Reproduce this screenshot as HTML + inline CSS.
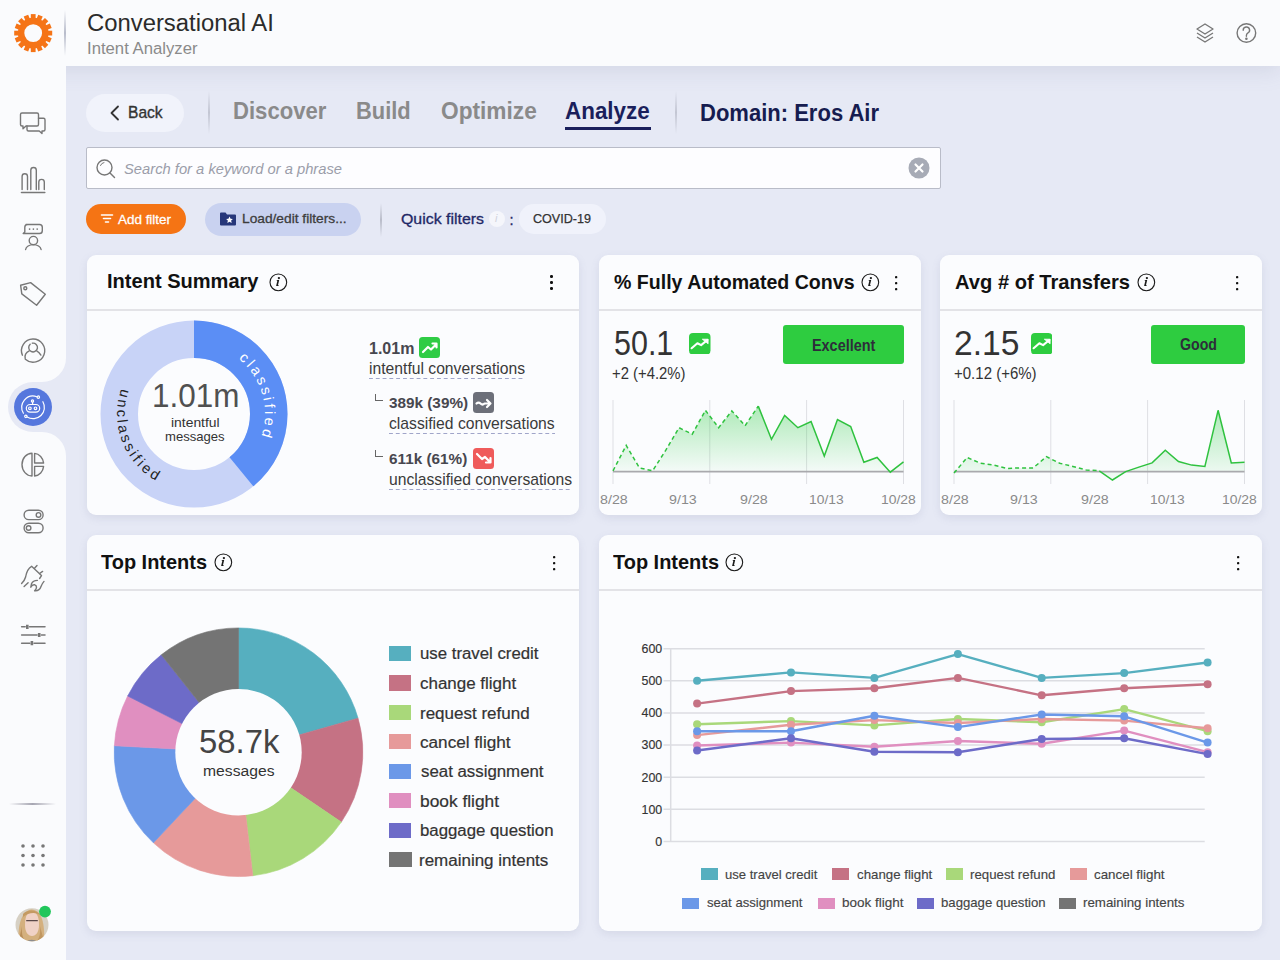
<!DOCTYPE html>
<html><head><meta charset="utf-8">
<style>
*{margin:0;padding:0;box-sizing:border-box}
html,body{width:1280px;height:960px;overflow:hidden}
body{font-family:"Liberation Sans",sans-serif;background:#e6e9f5;position:relative;color:#222}
.abs{position:absolute}
.t{position:absolute;white-space:nowrap;line-height:1}
#header{position:absolute;left:0;top:0;width:1280px;height:66px;background:#fafbfd;z-index:3;box-shadow:0 5px 20px rgba(105,115,150,0.15)}
#side{position:absolute;left:0;top:0;width:66px;height:960px;background:#fafbfd;z-index:4}
.card{position:absolute;background:#fbfcfe;border-radius:9px;box-shadow:0 3px 8px rgba(100,110,150,0.13)}
.chead{position:absolute;left:0;right:0;top:0;height:56px;border-bottom:2px solid #e3e3e7}
.title{position:absolute;font-weight:bold;color:#111;font-size:20px;white-space:nowrap;line-height:1}
.kebab{position:absolute;width:3px}
.kebab i{display:block;width:3px;height:3px;border-radius:50%;background:#222;margin-bottom:3px}
</style></head>
<body>
<div id="side">
<svg class="abs" style="left:0;top:0" width="66" height="66" viewBox="0 0 66 66">
    <g fill="#f57417" transform="translate(33.2 33.1)">
    <circle r="12.1" fill="none" stroke="#f57417" stroke-width="6.4"/>
    <rect x="-2.4" y="-19" width="4.8" height="6" transform="rotate(0)"/><rect x="-2.4" y="-19" width="4.8" height="6" transform="rotate(22.5)"/><rect x="-2.4" y="-19" width="4.8" height="6" transform="rotate(45)"/><rect x="-2.4" y="-19" width="4.8" height="6" transform="rotate(67.5)"/><rect x="-2.4" y="-19" width="4.8" height="6" transform="rotate(90)"/><rect x="-2.4" y="-19" width="4.8" height="6" transform="rotate(112.5)"/><rect x="-2.4" y="-19" width="4.8" height="6" transform="rotate(135)"/><rect x="-2.4" y="-19" width="4.8" height="6" transform="rotate(157.5)"/><rect x="-2.4" y="-19" width="4.8" height="6" transform="rotate(180)"/><rect x="-2.4" y="-19" width="4.8" height="6" transform="rotate(202.5)"/><rect x="-2.4" y="-19" width="4.8" height="6" transform="rotate(225)"/><rect x="-2.4" y="-19" width="4.8" height="6" transform="rotate(247.5)"/><rect x="-2.4" y="-19" width="4.8" height="6" transform="rotate(270)"/><rect x="-2.4" y="-19" width="4.8" height="6" transform="rotate(292.5)"/><rect x="-2.4" y="-19" width="4.8" height="6" transform="rotate(315)"/><rect x="-2.4" y="-19" width="4.8" height="6" transform="rotate(337.5)"/>
    </g>
  </svg>
  <div class="abs" style="left:64px;top:10px;width:2px;height:46px;background:linear-gradient(rgba(200,204,216,0),#b8bccb 50%,rgba(200,204,216,0))"></div>
  
  <!-- active notch -->
  <div class="abs" style="left:33px;top:340px;width:40px;height:130px;background:#e6e9f5"></div>
  <div class="abs" style="left:20px;top:318px;width:46px;height:64px;background:#fafbfd;border-bottom-right-radius:24px"></div>
  <div class="abs" style="left:20px;top:432px;width:46px;height:64px;background:#fafbfd;border-top-right-radius:24px"></div>
  <div class="abs" style="left:8px;top:382px;width:50px;height:50px;border-radius:50%;background:#e6e9f5"></div>
  <div class="abs" style="left:14px;top:388px;width:38px;height:38px;border-radius:50%;background:#5577dd"></div>
  <svg class="abs" style="left:0;top:0" width="66" height="960" viewBox="0 0 66 960" fill="none" stroke="#777" stroke-width="1.4" stroke-linejoin="round" stroke-linecap="round">
    <path d="M22 113 h15 a1.5 1.5 0 0 1 1.5 1.5 v10 a1.5 1.5 0 0 1 -1.5 1.5 h-11 l-3 2.8 v-2.8 h-1 a1.5 1.5 0 0 1 -1.5 -1.5 v-10 a1.5 1.5 0 0 1 1.5 -1.5z"/>
    <path d="M38.5 118.3 h5 a1.5 1.5 0 0 1 1.5 1.5 v9.7 a1.5 1.5 0 0 1 -1.5 1.5 h-1.5 l0 2.5 l-2.8 -2.5 h-10.7 a1.5 1.5 0 0 1 -1.5 -1.5 v-3.5"/>
    <path d="M22.1 189.5 v-13 a2.7 2.7 0 0 1 5.4 0 v13 M30.8 189.5 v-19.3 a2.75 2.75 0 0 1 5.5 0 v19.3 M38.8 189.5 v-7.4 a2.75 2.75 0 0 1 5.5 0 v7.4"/>
    <path d="M21.5 192.5 h23.3" stroke-width="1.6"/>
    <path d="M26 224.5 h13.5 a2.8 2.8 0 0 1 2.8 2.8 v3.4 a2.8 2.8 0 0 1 -2.8 2.8 h-16.3 l1.6 -1.6 v-4.6 a2.8 2.8 0 0 1 2.8 -2.8z"/>
    <g fill="#777" stroke="none"><circle cx="29.6" cy="229.1" r="0.85"/><circle cx="33.4" cy="229.1" r="0.85"/><circle cx="37.2" cy="229.1" r="0.85"/></g>
    <circle cx="33.4" cy="240.6" r="4.2"/>
    <path d="M25.6 249.5 a7.8 5.5 0 0 1 15.5 0"/>
    <path d="M20.6 285.2 L30.6 282.6 L45.3 294.3 L36.6 305.2 L21.8 293.9 Z"/>
    <circle cx="25.3" cy="288.2" r="1.5"/>
    <path d="M22.42 355.18 A11.6 11.6 0 1 1 25.34 359.27"/>
    <path d="M32.34 343.17 A4.4 4.4 0 1 1 30.16 344.23"/>
    <path d="M29.3 350.9 C25.8 352.6 24.6 355.6 25.2 358.4"/>
    <path d="M36.7 350.8 C38.6 351.8 40 353.4 40.9 355.1"/>
    <path d="M32 453.2 A10 11.4 0 0 0 32 476 Z"/>
    <path d="M34.6 453.4 A9.8 10.8 0 0 1 43.6 463 H34.6 Z"/>
    <path d="M34.6 466.4 H43.6 A9.8 10.8 0 0 1 34.6 476 Z"/>
    <rect x="24.1" y="510.2" width="19" height="9.4" rx="4.7"/>
    <circle cx="38.5" cy="514.9" r="2.3"/>
    <rect x="24.1" y="523.2" width="19" height="9.6" rx="4.8"/>
    <circle cx="28.6" cy="528" r="2.3"/>
    <path d="M21.6 583.4 C24 581 25 579.5 25.6 577 C26.5 572 28.5 568 31.6 566.3 L41.5 575.6 L39.6 578.5"/>
    <path d="M34.5 568.2 L37 565.6 M39.6 573.5 L42.6 571.4"/>
    <path d="M24.1 586.6 L28.1 582.8"/>
    <path d="M37.4 580.4 C35 580.6 32.6 581.5 31.6 583.5 L30.8 587.2 C31.6 585.6 33 584.4 34.8 584.8 C37 585.5 37.2 588.6 34.6 590.7 C37.5 591 40 589.5 41 586.5 C42 584 43 582.5 44 581.4"/>
    <path d="M21.6 626.8 h3.6 M29.5 626.8 h15.5 M21.6 635 h15.5 M41.3 635 h3.7 M21.6 643.2 h8.3 M34 643.2 h11" stroke-width="1.5"/>
    <path d="M27.3 624.8 v4.2 M39.2 632.9 v4.2 M31.9 641.1 v4.2" stroke-width="2.6" stroke-linecap="butt"/>
  </svg>
  <svg class="abs" style="left:14px;top:388px" width="38" height="38" viewBox="0 0 38 38" fill="none" stroke="#fff" stroke-width="1.2" stroke-linecap="round">
    <path d="M9.41 25.22 A11.3 11.3 0 0 1 22.96 8.78"/>
    <path d="M28.89 13.75 A11.3 11.3 0 0 1 13.11 28.98"/>
    <circle cx="24.32" cy="9.15" r="1.2"/>
    <circle cx="11.86" cy="28.34" r="1.2"/>
    <rect x="12.3" y="16.5" width="13.4" height="7.7" rx="3.85"/>
    <circle cx="15.9" cy="20.3" r="1.3"/><circle cx="21.5" cy="20.3" r="1.3"/>
    <path d="M18.6 16.5 v-2.3"/><circle cx="18.5" cy="13" r="1.1"/>
  </svg>
  <div class="abs" style="left:9px;top:803px;width:47px;height:2px;background:linear-gradient(90deg,rgba(160,160,175,0),#a6a6b2 50%,rgba(160,160,175,0))"></div>
  <svg class="abs" style="left:20px;top:843px" width="26" height="26" viewBox="0 0 26 26" fill="#777">
    <circle cx="3" cy="3" r="1.8"/><circle cx="13" cy="3" r="1.8"/><circle cx="23" cy="3" r="1.8"/>
    <circle cx="3" cy="12.5" r="1.8"/><circle cx="13" cy="12.5" r="1.8"/><circle cx="23" cy="12.5" r="1.8"/>
    <circle cx="3" cy="22" r="1.8"/><circle cx="13" cy="22" r="1.8"/><circle cx="23" cy="22" r="1.8"/>
  </svg>
  <svg class="abs" style="left:12px;top:902px" width="44" height="44" viewBox="12 902 44 44">
    <defs><clipPath id="av"><circle cx="32" cy="924.7" r="16.5"/></clipPath></defs>
    <circle cx="32" cy="924.7" r="16.5" fill="#d6d0c4"/>
    <g clip-path="url(#av)">
      <path d="M19 945 C17 930 20 911 31.5 909.5 C43 910 45 926 44 945 Z" fill="#d4b07e"/>
      <path d="M25 925 C25 915 28 912 32 912 C36 912 39 915 39 925 C39 932 36 936 32 936 C28 936 25 932 25 925Z" fill="#f0d2c6"/>
      <path d="M23 914 C27 909 37 909 41 916 C37 912 29 912 23 917Z" fill="#c49a62"/>
      <path d="M26.2 920.6 h5 M32.8 920.6 h5 M31.2 920.6 h1.6" stroke="#5a4848" stroke-width="1.1"/>
      <path d="M25 945 C26 938 37 938 39 945Z" fill="#8c8c8e"/>
      <path d="M22 926 C21 936 24 940 27 942 L24 945 L18 945Z" fill="#b98e58"/>
      <path d="M40 926 C41 936 38 940 36 942 L38 945 L45 945Z" fill="#c09660"/>
    </g>
    <circle cx="45" cy="911.6" r="5.9" fill="#21c65b"/>
  </svg>
</div>
<div id="header">
  <div class="t" style="left:87.31px;top:12.47px;font-size:23.33px;color:#2b2b2b;transform-origin:0 0;transform:scaleX(1.0222);">Conversational AI</div>
  <div class="t" style="left:86.99px;top:40.01px;font-size:16.13px;color:#8a8a8a;transform-origin:0 0;transform:scaleX(1.0367);">Intent Analyzer</div>
  <svg class="abs" style="left:1194px;top:21px" width="64" height="26" viewBox="0 0 64 26" fill="none" stroke="#777" stroke-width="1.4" stroke-linejoin="round">
    <path d="M11 3 l8 5 l-8 5 l-8 -5z"/>
    <path d="M3 12 l8 5 l8 -5"/>
    <path d="M3 16 l8 5 l8 -5"/>
    <circle cx="52.4" cy="12" r="9.3"/>
    <path d="M49.2 9.2 a3.2 3.2 0 1 1 4.5 2.9 c-1 0.5 -1.3 1.2 -1.3 2.3 v0.8" stroke-linecap="round"/>
    <circle cx="52.4" cy="17.8" r="0.6" fill="#777"/>
  </svg>
</div>
<!-- nav -->
<div class="abs" style="left:86px;top:94px;width:98px;height:38px;border-radius:19px;background:#f1f3fb"></div>
<svg class="abs" style="left:108px;top:104px" width="14" height="18" viewBox="0 0 14 18" fill="none" stroke="#333" stroke-width="1.8" stroke-linecap="round" stroke-linejoin="round"><path d="M10 2.5 l-6.5 6.5 l6.5 6.5"/></svg>
<div class="t" style="left:128.35px;top:105.23px;font-size:15.99px;color:#333;transform-origin:0 0;transform:scaleX(0.9739);-webkit-text-stroke:0.35px #333">Back</div>
<div class="abs" style="left:208px;top:91px;width:2px;height:43px;background:linear-gradient(rgba(200,204,216,0),#c3c6d3 50%,rgba(200,204,216,0))"></div>
<div class="t" style="left:233.26px;top:99.28px;font-size:24.50px;font-weight:bold;color:#8a8a8a;transform-origin:0 0;transform:scaleX(0.9020);">Discover</div>
<div class="t" style="left:356.48px;top:99.28px;font-size:24.50px;font-weight:bold;color:#8a8a8a;transform-origin:0 0;transform:scaleX(0.8938);">Build</div>
<div class="t" style="left:440.59px;top:99.28px;font-size:24.50px;font-weight:bold;color:#8a8a8a;transform-origin:0 0;transform:scaleX(0.9256);">Optimize</div>
<div class="t" style="left:565.04px;top:99.28px;font-size:24.50px;font-weight:bold;color:#1a1f5c;transform-origin:0 0;transform:scaleX(0.9151);">Analyze</div>
<div class="abs" style="left:565px;top:127px;width:86px;height:3px;background:#1a1f5c"></div>
<div class="abs" style="left:675px;top:91px;width:2px;height:43px;background:linear-gradient(rgba(200,204,216,0),#c3c6d3 50%,rgba(200,204,216,0))"></div>
<div class="t" style="left:700.27px;top:101.16px;font-size:24.40px;font-weight:bold;color:#161c50;transform-origin:0 0;transform:scaleX(0.9027);">Domain: Eros Air</div>
<!-- search -->
<div class="abs" style="left:86px;top:147px;width:855px;height:42px;background:#fdfdff;border:1.5px solid #b9bcc8;border-radius:2px"></div>
<svg class="abs" style="left:94px;top:157px" width="24" height="24" viewBox="0 0 24 24" fill="none" stroke="#777" stroke-width="1.4" stroke-linecap="round"><circle cx="10.5" cy="10.5" r="7.5"/><path d="M16 16 l4.5 4.5"/><path d="M6.5 8.5 a4.5 4.5 0 0 1 3.5 -3" stroke-width="1"/></svg>
<div class="t" style="left:123.56px;top:160.85px;font-size:15.40px;font-style:italic;color:#9b9daa;transform-origin:0 0;transform:scaleX(0.9581);">Search for a keyword or a phrase</div>
<svg class="abs" style="left:908px;top:157px" width="22" height="22" viewBox="0 0 22 22"><circle cx="11" cy="11" r="10.5" fill="#a7abb6"/><path d="M7.5 7.5 l7 7 M14.5 7.5 l-7 7" stroke="#fff" stroke-width="2.2" stroke-linecap="round"/></svg>
<!-- filters -->
<div class="abs" style="left:86px;top:204px;width:100px;height:30px;border-radius:15px;background:#f57414"></div>
<svg class="abs" style="left:100px;top:212px" width="14" height="14" viewBox="0 0 14 14" stroke="#fff" stroke-width="1.6" stroke-linecap="round"><path d="M1.5 3 h11 M3.5 6.5 h7 M5.5 10 h3"/></svg>
<div class="t" style="left:117.75px;top:212.67px;font-size:13.20px;color:#fff;transform-origin:0 0;transform:scaleX(1.0188);-webkit-text-stroke:0.3px #fff">Add filter</div>
<div class="abs" style="left:204.5px;top:202.8px;width:156.5px;height:33px;border-radius:16.5px;background:#c9d2f0"></div>
<svg class="abs" style="left:219px;top:211px" width="18" height="16" viewBox="0 0 18 16"><path d="M1 2.5 a1 1 0 0 1 1 -1 h4.5 l1.5 2 h8 a1 1 0 0 1 1 1 v9 a1 1 0 0 1 -1 1 h-14 a1 1 0 0 1 -1 -1z" fill="#27377a"/><path d="M10.5 5.6 l1.05 2.2 l2.35 0.25 l-1.75 1.55 l0.5 2.35 l-2.15 -1.2 l-2.15 1.2 l0.5 -2.35 l-1.75 -1.55 l2.35 -0.25z" fill="#fff"/></svg>
<div class="t" style="left:241.80px;top:212.37px;font-size:13.20px;color:#3d3d3d;transform-origin:0 0;transform:scaleX(1.0415);-webkit-text-stroke:0.3px #3d3d3d">Load/edit filters...</div>
<div class="abs" style="left:380px;top:203px;width:2px;height:34px;background:linear-gradient(rgba(200,204,216,0),#b9bcc9 50%,rgba(200,204,216,0))"></div>
<div class="t" style="left:401.28px;top:211.50px;font-size:14.60px;color:#1f2866;transform-origin:0 0;transform:scaleX(1.0883);-webkit-text-stroke:0.3px #1f2866">Quick filters</div>
<div class="abs" style="left:489px;top:211px;width:16px;height:16px;border-radius:50%;background:#f5f6fb"></div>
<div class="t" style="left:495px;top:213px;font-size:11px;font-style:italic;color:#d0d2dc">i</div>
<div class="t" style="left:509.5px;top:212.5px;font-size:14.5px;color:#1f2866;-webkit-text-stroke:0.3px #1f2866">:</div>
<div class="abs" style="left:519px;top:204px;width:87px;height:30px;border-radius:15px;background:#f0f2fb"></div>
<div class="t" style="left:533.12px;top:212.05px;font-size:13.10px;color:#333;transform-origin:0 0;transform:scaleX(0.9595);-webkit-text-stroke:0.25px #333">COVID-19</div>

<div class="card" style="left:87px;top:255px;width:492px;height:260px"><div class="chead"></div></div>
<div class="card" style="left:599px;top:255px;width:322px;height:260px"><div class="chead"></div></div>
<div class="card" style="left:940px;top:255px;width:322px;height:260px"><div class="chead"></div></div>
<div class="card" style="left:87px;top:535px;width:492px;height:396px"><div class="chead"></div></div>
<div class="card" style="left:599px;top:535px;width:663px;height:396px"><div class="chead"></div></div>
<div class="title" style="left:107px;top:270.47px;font-size:21px;transform-origin:0 0;transform:scaleX(0.9546)">Intent Summary</div>
<svg class="abs" style="left:268.05px;top:271.55px" width="20.7" height="20.7" viewBox="0 0 20.7 20.7"><circle cx="10.35" cy="10.35" r="8.35" fill="none" stroke="#1a1a1a" stroke-width="1.1"/><circle cx="10.9" cy="6.1" r="1.15" fill="#1a1a1a"/><path d="M8.9 8.05 h2.3 l-1.25 5.2 h0.9 l-0.25 0.75 h-2.5 l1.25 -5.2 h-0.75 z" fill="#1a1a1a"/></svg>
<svg class="abs" style="left:550px;top:275px" width="4" height="16" viewBox="0 0 4 16" fill="#111"><rect y="0" width="3" height="3" rx="1.2"/><rect y="6" width="3" height="3" rx="1.2"/><rect y="12" width="3" height="3" rx="1.2"/></svg>
<div class="title" style="left:613.5px;top:270.97px;font-size:21px;transform-origin:0 0;transform:scaleX(0.9313)">% Fully Automated Convs</div>
<svg class="abs" style="left:860.25px;top:271.65px" width="20.7" height="20.7" viewBox="0 0 20.7 20.7"><circle cx="10.35" cy="10.35" r="8.35" fill="none" stroke="#1a1a1a" stroke-width="1.1"/><circle cx="10.9" cy="6.1" r="1.15" fill="#1a1a1a"/><path d="M8.9 8.05 h2.3 l-1.25 5.2 h0.9 l-0.25 0.75 h-2.5 l1.25 -5.2 h-0.75 z" fill="#1a1a1a"/></svg>
<svg class="abs" style="left:894.9px;top:276.1px" width="4" height="16" viewBox="0 0 4 16" fill="#111"><rect y="0" width="2.3" height="2.3" rx="0.92"/><rect y="6" width="2.3" height="2.3" rx="0.92"/><rect y="12" width="2.3" height="2.3" rx="0.92"/></svg>
<div class="title" style="left:954.7px;top:270.97px;font-size:21px;transform-origin:0 0;transform:scaleX(0.9592)">Avg # of Transfers</div>
<svg class="abs" style="left:1135.65px;top:271.65px" width="20.7" height="20.7" viewBox="0 0 20.7 20.7"><circle cx="10.35" cy="10.35" r="8.35" fill="none" stroke="#1a1a1a" stroke-width="1.1"/><circle cx="10.9" cy="6.1" r="1.15" fill="#1a1a1a"/><path d="M8.9 8.05 h2.3 l-1.25 5.2 h0.9 l-0.25 0.75 h-2.5 l1.25 -5.2 h-0.75 z" fill="#1a1a1a"/></svg>
<svg class="abs" style="left:1236.2px;top:276.2px" width="4" height="16" viewBox="0 0 4 16" fill="#111"><rect y="0" width="2.3" height="2.3" rx="0.92"/><rect y="6" width="2.3" height="2.3" rx="0.92"/><rect y="12" width="2.3" height="2.3" rx="0.92"/></svg>
<div class="title" style="left:101.4px;top:550.97px;font-size:21px;transform-origin:0 0;transform:scaleX(0.9499)">Top Intents</div>
<svg class="abs" style="left:212.65px;top:551.65px" width="20.7" height="20.7" viewBox="0 0 20.7 20.7"><circle cx="10.35" cy="10.35" r="8.35" fill="none" stroke="#1a1a1a" stroke-width="1.1"/><circle cx="10.9" cy="6.1" r="1.15" fill="#1a1a1a"/><path d="M8.9 8.05 h2.3 l-1.25 5.2 h0.9 l-0.25 0.75 h-2.5 l1.25 -5.2 h-0.75 z" fill="#1a1a1a"/></svg>
<svg class="abs" style="left:553.4px;top:555.8px" width="4" height="16" viewBox="0 0 4 16" fill="#111"><rect y="0" width="2.3" height="2.3" rx="0.92"/><rect y="6" width="2.3" height="2.3" rx="0.92"/><rect y="12" width="2.3" height="2.3" rx="0.92"/></svg>
<div class="title" style="left:613.2px;top:550.97px;font-size:21px;transform-origin:0 0;transform:scaleX(0.9499)">Top Intents</div>
<svg class="abs" style="left:724.15px;top:551.65px" width="20.7" height="20.7" viewBox="0 0 20.7 20.7"><circle cx="10.35" cy="10.35" r="8.35" fill="none" stroke="#1a1a1a" stroke-width="1.1"/><circle cx="10.9" cy="6.1" r="1.15" fill="#1a1a1a"/><path d="M8.9 8.05 h2.3 l-1.25 5.2 h0.9 l-0.25 0.75 h-2.5 l1.25 -5.2 h-0.75 z" fill="#1a1a1a"/></svg>
<svg class="abs" style="left:1236.8px;top:555.8px" width="4" height="16" viewBox="0 0 4 16" fill="#111"><rect y="0" width="2.3" height="2.3" rx="0.92"/><rect y="6" width="2.3" height="2.3" rx="0.92"/><rect y="12" width="2.3" height="2.3" rx="0.92"/></svg>
<svg class="abs" style="left:87px;top:310px" width="220" height="205" viewBox="87 310 220 205">
<circle cx="194" cy="414" r="74.75" fill="none" stroke="#c8d3f7" stroke-width="37.5"/>
<circle cx="194" cy="414" r="74.75" fill="none" stroke="#5b8ef5" stroke-width="37.5" stroke-dasharray="183.171 469.668" transform="rotate(-90 194 414)"/>
<path id="pc" d="M175.026 345.582 A71 71 0 0 1 212.974 482.418" fill="none"/>
<path id="pu" d="M165.779 342.358 A77 77 0 0 0 222.221 485.642" fill="none"/>
<text font-family="Liberation Sans" font-size="14.5" letter-spacing="2.9" fill="#fff"><textPath href="#pc" startOffset="50%" text-anchor="middle">classified</textPath></text>
<text font-family="Liberation Sans" font-size="14.5" letter-spacing="2.8" fill="#222"><textPath href="#pu" startOffset="50%" text-anchor="middle">unclassified</textPath></text>
</svg>
<div class="t" style="left:151.64px;top:380.44px;font-size:32.50px;color:#505050;transform-origin:0 0;transform:scaleX(0.9674);">1.01m</div>
<div class="t" style="left:170.50px;top:415.91px;font-size:13.40px;color:#333;transform-origin:0 0;transform:scaleX(1.0364);">intentful</div>
<div class="t" style="left:164.95px;top:429.61px;font-size:13.40px;color:#333;transform-origin:0 0;transform:scaleX(0.9772);">messages</div>
<div class="t" style="left:369px;top:341px;font-size:16px;font-weight:bold;color:#47474f">1.01m</div>
<svg class="abs" style="left:419px;top:337px" width="21" height="21" viewBox="0 0 21 21"><rect width="21" height="21" rx="3.5" fill="#2fcc45"/><path d="M4 15 L9 10 L12 12.5 L17 7.5 M13.5 6.5 h4 v4" fill="none" stroke="#fff" stroke-width="2.2" stroke-linecap="round" stroke-linejoin="round"/></svg>
<div class="t" style="left:369px;top:361px;font-size:15.7px;color:#3a3a3a;padding-bottom:2.2px;background:linear-gradient(90deg,#a0a5c9 62%,rgba(0,0,0,0) 0) repeat-x 0 100%/6.8px 1.2px">intentful conversations</div>
<div class="abs" style="left:375px;top:394px;width:8px;height:7px;border-left:1.3px solid #666;border-bottom:1.3px solid #666"></div>
<div class="t" style="left:389px;top:395px;font-size:15.3px;font-weight:bold;color:#47474f">389k (39%)</div>
<svg class="abs" style="left:473px;top:392px" width="21" height="21" viewBox="0 0 21 21"><rect width="21" height="21" rx="3.5" fill="#6c6f79"/><path d="M3.5 11.5 q2 -2 4 0 t4 0 h6 M14 8 l3.5 3.5 l-3.5 3.5" fill="none" stroke="#fff" stroke-width="2.2" stroke-linecap="round" stroke-linejoin="round"/></svg>
<div class="t" style="left:389px;top:416px;font-size:15.7px;color:#3a3a3a;padding-bottom:2.2px;background:linear-gradient(90deg,#a0a5c9 62%,rgba(0,0,0,0) 0) repeat-x 0 100%/6.8px 1.2px">classified conversations</div>
<div class="abs" style="left:375px;top:450px;width:8px;height:7px;border-left:1.3px solid #666;border-bottom:1.3px solid #666"></div>
<div class="t" style="left:389px;top:451px;font-size:15.3px;font-weight:bold;color:#47474f">611k (61%)</div>
<svg class="abs" style="left:473px;top:448px" width="21" height="21" viewBox="0 0 21 21"><rect width="21" height="21" rx="3.5" fill="#ef5b5b"/><path d="M4 6 L9 11 L12 9 L17 14 M13 14.5 h4.5 v-4.5" fill="none" stroke="#fff" stroke-width="2.2" stroke-linecap="round" stroke-linejoin="round"/></svg>
<div class="t" style="left:389px;top:472px;font-size:15.7px;color:#3a3a3a;padding-bottom:2.2px;background:linear-gradient(90deg,#a0a5c9 62%,rgba(0,0,0,0) 0) repeat-x 0 100%/6.8px 1.2px">unclassified conversations</div>
<div class="t" style="left:613.58px;top:326.49px;font-size:34.30px;color:#333;transform-origin:0 0;transform:scaleX(0.8887);">50.1</div>
<div class="t" style="left:612.46px;top:365.58px;font-size:16.55px;color:#333;transform-origin:0 0;transform:scaleX(0.8984);">+2 (+4.2%)</div>
<div class="abs" style="left:783.25px;top:324.7px;width:120.85px;height:39px;background:#2ecc40;border-radius:3px"></div>
<div class="t" style="left:812.06px;top:337.54px;font-size:15.72px;font-weight:bold;color:#2d2d3a;transform-origin:0 0;transform:scaleX(0.9167);">Excellent</div>
<svg class="abs" style="left:689.4px;top:332.8px" width="21.5" height="21.5" viewBox="0 0 21.5 21.5"><rect width="21.5" height="21.5" rx="4" fill="#2ecc40"/><path d="M2.6 15.2 L8.4 10.2 L12.1 12.1 L18.4 7" fill="none" stroke="#fff" stroke-width="2.1" stroke-linecap="round" stroke-linejoin="round"/><path d="M13.3 6.2 H19.1 V10.8 Z" fill="#fff" stroke="#fff" stroke-width="0.8" stroke-linejoin="round"/></svg>
<div class="t" style="left:953.62px;top:326.49px;font-size:34.30px;color:#333;transform-origin:0 0;transform:scaleX(0.9792);">2.15</div>
<div class="t" style="left:953.65px;top:365.58px;font-size:16.55px;color:#333;transform-origin:0 0;transform:scaleX(0.9079);">+0.12 (+6%)</div>
<div class="abs" style="left:1150.9px;top:324.7px;width:94.1px;height:39px;background:#2ecc40;border-radius:3px"></div>
<div class="t" style="left:1179.93px;top:336.94px;font-size:16.97px;font-weight:bold;color:#2d2d3a;transform-origin:0 0;transform:scaleX(0.8353);">Good</div>
<svg class="abs" style="left:1030.8px;top:332.8px" width="21.5" height="21.5" viewBox="0 0 21.5 21.5"><rect width="21.5" height="21.5" rx="4" fill="#2ecc40"/><path d="M2.6 15.2 L8.4 10.2 L12.1 12.1 L18.4 7" fill="none" stroke="#fff" stroke-width="2.1" stroke-linecap="round" stroke-linejoin="round"/><path d="M13.3 6.2 H19.1 V10.8 Z" fill="#fff" stroke="#fff" stroke-width="0.8" stroke-linejoin="round"/></svg>
<svg class="abs" style="left:599px;top:395px" width="310" height="120" viewBox="599 395 310 120"><defs><linearGradient id="g599" x1="0" y1="0" x2="0" y2="1"><stop offset="0" stop-color="#2fcc45" stop-opacity="0.38"/><stop offset="1" stop-color="#2fcc45" stop-opacity="0.03"/></linearGradient></defs><line x1="613" y1="400" x2="613" y2="484" stroke="#dedfe4" stroke-width="1"/><line x1="709.8" y1="400" x2="709.8" y2="484" stroke="#dedfe4" stroke-width="1"/><line x1="806.6" y1="400" x2="806.6" y2="484" stroke="#dedfe4" stroke-width="1"/><line x1="903.5" y1="400" x2="903.5" y2="484" stroke="#dedfe4" stroke-width="1"/><path d="M613 471.6 L613 470.8 L626.205 445.4 L639.409 467.9 L652.614 470.8 L665.818 450.2 L679.023 427.7 L692.227 434.2 L705.432 410.3 L718.636 427.7 L731.841 410.9 L745.045 425.8 L758.25 406.1 L771.455 439.3 L784.659 415.4 L797.864 427.7 L811.068 421.5 L824.273 456.1 L837.477 419.6 L850.682 426.6 L863.886 462.3 L877.091 457.5 L890.295 472.2 L903.5 461.8 L903.5 471.6 Z" fill="url(#g599)"/><line x1="613" y1="471.6" x2="903.5" y2="471.6" stroke="#a9a9ad" stroke-width="1.6"/><path d="M613 470.8 L626.205 445.4 L639.409 467.9 L652.614 470.8 L665.818 450.2 L679.023 427.7 L692.227 434.2 L705.432 410.3 L718.636 427.7 L731.841 410.9 L745.045 425.8 L758.25 406.1" fill="none" stroke="#2fc23f" stroke-width="1.5" stroke-dasharray="4 3"/><path d="M758.25 406.1 L771.455 439.3 L784.659 415.4 L797.864 427.7 L811.068 421.5 L824.273 456.1 L837.477 419.6 L850.682 426.6 L863.886 462.3 L877.091 457.5 L890.295 472.2 L903.5 461.8" fill="none" stroke="#2fc23f" stroke-width="1.5"/></svg>
<div class="t" style="left:599.96px;top:493.56px;font-size:12.97px;color:#8a8a8a;transform-origin:0 0;transform:scaleX(1.0989);">8/28</div>
<div class="t" style="left:669.16px;top:493.56px;font-size:12.97px;color:#8a8a8a;transform-origin:0 0;transform:scaleX(1.0989);">9/13</div>
<div class="t" style="left:740.16px;top:493.56px;font-size:12.97px;color:#8a8a8a;transform-origin:0 0;transform:scaleX(1.0989);">9/28</div>
<div class="t" style="left:809.16px;top:493.56px;font-size:12.97px;color:#8a8a8a;transform-origin:0 0;transform:scaleX(1.0672);">10/13</div>
<div class="t" style="left:880.86px;top:493.56px;font-size:12.97px;color:#8a8a8a;transform-origin:0 0;transform:scaleX(1.0736);">10/28</div>
<svg class="abs" style="left:940px;top:395px" width="310" height="120" viewBox="940 395 310 120"><defs><linearGradient id="g940" x1="0" y1="0" x2="0" y2="1"><stop offset="0" stop-color="#2fcc45" stop-opacity="0.38"/><stop offset="1" stop-color="#2fcc45" stop-opacity="0.03"/></linearGradient></defs><line x1="954" y1="400" x2="954" y2="484" stroke="#dedfe4" stroke-width="1"/><line x1="1050.8" y1="400" x2="1050.8" y2="484" stroke="#dedfe4" stroke-width="1"/><line x1="1147.6" y1="400" x2="1147.6" y2="484" stroke="#dedfe4" stroke-width="1"/><line x1="1244.5" y1="400" x2="1244.5" y2="484" stroke="#dedfe4" stroke-width="1"/><path d="M954 471.6 L954 473 L967.205 457.5 L980.409 463.2 L993.614 465.1 L1006.82 468.5 L1020.02 467.9 L1033.23 467.9 L1046.43 456.7 L1059.64 463.2 L1072.84 466.5 L1086.05 469.9 L1099.25 470.8 L1112.45 480 L1125.66 471.6 L1138.86 467.1 L1152.07 462.9 L1165.27 450.2 L1178.48 461.5 L1191.68 465.1 L1204.89 466.5 L1218.09 410.3 L1231.3 462.9 L1244.5 462.3 L1244.5 471.6 Z" fill="url(#g940)"/><line x1="954" y1="471.6" x2="1244.5" y2="471.6" stroke="#a9a9ad" stroke-width="1.6"/><path d="M954 473 L967.205 457.5 L980.409 463.2 L993.614 465.1 L1006.82 468.5 L1020.02 467.9 L1033.23 467.9 L1046.43 456.7 L1059.64 463.2 L1072.84 466.5 L1086.05 469.9 L1099.25 470.8" fill="none" stroke="#2fc23f" stroke-width="1.5" stroke-dasharray="4 3"/><path d="M1099.25 470.8 L1112.45 480 L1125.66 471.6 L1138.86 467.1 L1152.07 462.9 L1165.27 450.2 L1178.48 461.5 L1191.68 465.1 L1204.89 466.5 L1218.09 410.3 L1231.3 462.9 L1244.5 462.3" fill="none" stroke="#2fc23f" stroke-width="1.5"/></svg>
<div class="t" style="left:940.96px;top:493.56px;font-size:12.97px;color:#8a8a8a;transform-origin:0 0;transform:scaleX(1.0989);">8/28</div>
<div class="t" style="left:1010.16px;top:493.56px;font-size:12.97px;color:#8a8a8a;transform-origin:0 0;transform:scaleX(1.0989);">9/13</div>
<div class="t" style="left:1081.16px;top:493.56px;font-size:12.97px;color:#8a8a8a;transform-origin:0 0;transform:scaleX(1.0989);">9/28</div>
<div class="t" style="left:1150.16px;top:493.56px;font-size:12.97px;color:#8a8a8a;transform-origin:0 0;transform:scaleX(1.0672);">10/13</div>
<div class="t" style="left:1221.86px;top:493.56px;font-size:12.97px;color:#8a8a8a;transform-origin:0 0;transform:scaleX(1.0736);">10/28</div>
<svg class="abs" style="left:100px;top:615px" width="280" height="275" viewBox="100 615 280 275"><path d="M238.5 752.25 L238.50 627.95 A124.3 124.3 0 0 1 358.04 718.20 Z" fill="#56afbf" stroke="#56afbf" stroke-width="0.6"/><path d="M238.5 752.25 L358.04 718.20 A124.3 124.3 0 0 1 341.31 822.12 Z" fill="#c57284" stroke="#c57284" stroke-width="0.6"/><path d="M238.5 752.25 L341.31 822.12 A124.3 124.3 0 0 1 252.79 875.73 Z" fill="#a9d87a" stroke="#a9d87a" stroke-width="0.6"/><path d="M238.5 752.25 L252.79 875.73 A124.3 124.3 0 0 1 153.41 842.86 Z" fill="#e69a9a" stroke="#e69a9a" stroke-width="0.6"/><path d="M238.5 752.25 L153.41 842.86 A124.3 124.3 0 0 1 114.37 745.74 Z" fill="#6b98e8" stroke="#6b98e8" stroke-width="0.6"/><path d="M238.5 752.25 L114.37 745.74 A124.3 124.3 0 0 1 127.65 696.01 Z" fill="#e08fc0" stroke="#e08fc0" stroke-width="0.6"/><path d="M238.5 752.25 L127.65 696.01 A124.3 124.3 0 0 1 161.29 654.84 Z" fill="#6d6bc8" stroke="#6d6bc8" stroke-width="0.6"/><path d="M238.5 752.25 L161.29 654.84 A124.3 124.3 0 0 1 238.50 627.95 Z" fill="#747474" stroke="#747474" stroke-width="0.6"/><circle cx="238.5" cy="752.25" r="63.2" fill="#fbfcfe"/></svg>
<div class="t" style="left:199.19px;top:724.23px;font-size:34.00px;color:#444;transform-origin:0 0;transform:scaleX(0.9661);">58.7k</div>
<div class="t" style="left:202.98px;top:763.26px;font-size:15.20px;color:#333;transform-origin:0 0;transform:scaleX(1.0326);">messages</div>
<div class="abs" style="left:388.9px;top:645.9px;width:22.3px;height:15.2px;background:#56afbf"></div>
<div class="t" style="left:419.91px;top:646.42px;font-size:16.00px;color:#333;transform-origin:0 0;transform:scaleX(1.0487);-webkit-text-stroke:0.2px #333">use travel credit</div>
<div class="abs" style="left:388.9px;top:675.4px;width:22.3px;height:15.2px;background:#c57284"></div>
<div class="t" style="left:420.32px;top:675.92px;font-size:16.00px;color:#333;transform-origin:0 0;transform:scaleX(1.0600);-webkit-text-stroke:0.2px #333">change flight</div>
<div class="abs" style="left:388.9px;top:705px;width:22.3px;height:15.2px;background:#a9d87a"></div>
<div class="t" style="left:419.90px;top:705.52px;font-size:16.00px;color:#333;transform-origin:0 0;transform:scaleX(1.0621);-webkit-text-stroke:0.2px #333">request refund</div>
<div class="abs" style="left:388.9px;top:734.2px;width:22.3px;height:15.2px;background:#e69a9a"></div>
<div class="t" style="left:420.31px;top:734.72px;font-size:16.00px;color:#333;transform-origin:0 0;transform:scaleX(1.0721);-webkit-text-stroke:0.2px #333">cancel flight</div>
<div class="abs" style="left:388.9px;top:763.7px;width:22.3px;height:15.2px;background:#6b98e8"></div>
<div class="t" style="left:420.50px;top:764.22px;font-size:16.00px;color:#333;transform-origin:0 0;transform:scaleX(1.0516);-webkit-text-stroke:0.2px #333">seat assignment</div>
<div class="abs" style="left:388.9px;top:793px;width:22.3px;height:15.2px;background:#e08fc0"></div>
<div class="t" style="left:419.87px;top:793.52px;font-size:16.00px;color:#333;transform-origin:0 0;transform:scaleX(1.0842);-webkit-text-stroke:0.2px #333">book flight</div>
<div class="abs" style="left:388.9px;top:822.8px;width:22.3px;height:15.2px;background:#6d6bc8"></div>
<div class="t" style="left:419.91px;top:823.32px;font-size:16.00px;color:#333;transform-origin:0 0;transform:scaleX(1.0494);-webkit-text-stroke:0.2px #333">baggage question</div>
<div class="abs" style="left:388.9px;top:852px;width:23.4px;height:15.2px;background:#747474"></div>
<div class="t" style="left:419.30px;top:852.52px;font-size:16.00px;color:#333;transform-origin:0 0;transform:scaleX(1.0612);-webkit-text-stroke:0.2px #333">remaining intents</div>
<svg class="abs" style="left:599px;top:590px" width="663" height="340" viewBox="599 590 663 340"><line x1="663.5" y1="841.4" x2="1204.7" y2="841.4" stroke="#dcdde2" stroke-width="1.5"/><line x1="663.5" y1="809.28" x2="1204.7" y2="809.28" stroke="#dcdde2" stroke-width="1.5"/><line x1="663.5" y1="777.16" x2="1204.7" y2="777.16" stroke="#dcdde2" stroke-width="1.5"/><line x1="663.5" y1="745.04" x2="1204.7" y2="745.04" stroke="#dcdde2" stroke-width="1.5"/><line x1="663.5" y1="712.92" x2="1204.7" y2="712.92" stroke="#dcdde2" stroke-width="1.5"/><line x1="663.5" y1="680.8" x2="1204.7" y2="680.8" stroke="#dcdde2" stroke-width="1.5"/><line x1="663.5" y1="648.68" x2="1204.7" y2="648.68" stroke="#dcdde2" stroke-width="1.5"/><line x1="670.7" y1="648.68" x2="670.7" y2="841.4" stroke="#dcdde2" stroke-width="1.5"/><text x="662.2" y="845.85" text-anchor="end" font-family="Liberation Sans" font-size="12.4" fill="#333" stroke="#333" stroke-width="0.15">0</text><text x="662.2" y="813.73" text-anchor="end" font-family="Liberation Sans" font-size="12.4" fill="#333" stroke="#333" stroke-width="0.15">100</text><text x="662.2" y="781.61" text-anchor="end" font-family="Liberation Sans" font-size="12.4" fill="#333" stroke="#333" stroke-width="0.15">200</text><text x="662.2" y="749.49" text-anchor="end" font-family="Liberation Sans" font-size="12.4" fill="#333" stroke="#333" stroke-width="0.15">300</text><text x="662.2" y="717.37" text-anchor="end" font-family="Liberation Sans" font-size="12.4" fill="#333" stroke="#333" stroke-width="0.15">400</text><text x="662.2" y="685.25" text-anchor="end" font-family="Liberation Sans" font-size="12.4" fill="#333" stroke="#333" stroke-width="0.15">500</text><text x="662.2" y="653.13" text-anchor="end" font-family="Liberation Sans" font-size="12.4" fill="#333" stroke="#333" stroke-width="0.15">600</text><polyline points="697.1,680.8 791.0,672.4 874.4,677.9 957.9,654.1 1041.7,677.9 1124.2,673.1 1207.6,662.5" fill="none" stroke="#56afbf" stroke-width="2.4" stroke-linejoin="round"/><circle cx="697.1" cy="680.8" r="4" fill="#56afbf"/><circle cx="791.0" cy="672.4" r="4" fill="#56afbf"/><circle cx="874.4" cy="677.9" r="4" fill="#56afbf"/><circle cx="957.9" cy="654.1" r="4" fill="#56afbf"/><circle cx="1041.7" cy="677.9" r="4" fill="#56afbf"/><circle cx="1124.2" cy="673.1" r="4" fill="#56afbf"/><circle cx="1207.6" cy="662.5" r="4" fill="#56afbf"/><polyline points="697.1,703.6 791.0,691.1 874.4,688.2 957.9,677.9 1041.7,695.3 1124.2,688.2 1207.6,684.3" fill="none" stroke="#c57284" stroke-width="2.4" stroke-linejoin="round"/><circle cx="697.1" cy="703.6" r="4" fill="#c57284"/><circle cx="791.0" cy="691.1" r="4" fill="#c57284"/><circle cx="874.4" cy="688.2" r="4" fill="#c57284"/><circle cx="957.9" cy="677.9" r="4" fill="#c57284"/><circle cx="1041.7" cy="695.3" r="4" fill="#c57284"/><circle cx="1124.2" cy="688.2" r="4" fill="#c57284"/><circle cx="1207.6" cy="684.3" r="4" fill="#c57284"/><polyline points="697.1,724.2 791.0,721.1 874.4,725.4 957.9,719.0 1041.7,722.2 1124.2,709.1 1207.6,731.2" fill="none" stroke="#a9d87a" stroke-width="2.4" stroke-linejoin="round"/><circle cx="697.1" cy="724.2" r="4" fill="#a9d87a"/><circle cx="791.0" cy="721.1" r="4" fill="#a9d87a"/><circle cx="874.4" cy="725.4" r="4" fill="#a9d87a"/><circle cx="957.9" cy="719.0" r="4" fill="#a9d87a"/><circle cx="1041.7" cy="722.2" r="4" fill="#a9d87a"/><circle cx="1124.2" cy="709.1" r="4" fill="#a9d87a"/><circle cx="1207.6" cy="731.2" r="4" fill="#a9d87a"/><polyline points="697.1,735.1 791.0,724.8 874.4,720.1 957.9,723.0 1041.7,719.0 1124.2,720.6 1207.6,728.3" fill="none" stroke="#e69a9a" stroke-width="2.4" stroke-linejoin="round"/><circle cx="697.1" cy="735.1" r="4" fill="#e69a9a"/><circle cx="791.0" cy="724.8" r="4" fill="#e69a9a"/><circle cx="874.4" cy="720.1" r="4" fill="#e69a9a"/><circle cx="957.9" cy="723.0" r="4" fill="#e69a9a"/><circle cx="1041.7" cy="719.0" r="4" fill="#e69a9a"/><circle cx="1124.2" cy="720.6" r="4" fill="#e69a9a"/><circle cx="1207.6" cy="728.3" r="4" fill="#e69a9a"/><polyline points="697.1,731.2 791.0,731.2 874.4,715.8 957.9,727.1 1041.7,714.5 1124.2,716.3 1207.6,742.6" fill="none" stroke="#6b98e8" stroke-width="2.4" stroke-linejoin="round"/><circle cx="697.1" cy="731.2" r="4" fill="#6b98e8"/><circle cx="791.0" cy="731.2" r="4" fill="#6b98e8"/><circle cx="874.4" cy="715.8" r="4" fill="#6b98e8"/><circle cx="957.9" cy="727.1" r="4" fill="#6b98e8"/><circle cx="1041.7" cy="714.5" r="4" fill="#6b98e8"/><circle cx="1124.2" cy="716.3" r="4" fill="#6b98e8"/><circle cx="1207.6" cy="742.6" r="4" fill="#6b98e8"/><polyline points="697.1,745.5 791.0,742.6 874.4,746.7 957.9,741.0 1041.7,743.8 1124.2,730.6 1207.6,752.2" fill="none" stroke="#e08fc0" stroke-width="2.4" stroke-linejoin="round"/><circle cx="697.1" cy="745.5" r="4" fill="#e08fc0"/><circle cx="791.0" cy="742.6" r="4" fill="#e08fc0"/><circle cx="874.4" cy="746.7" r="4" fill="#e08fc0"/><circle cx="957.9" cy="741.0" r="4" fill="#e08fc0"/><circle cx="1041.7" cy="743.8" r="4" fill="#e08fc0"/><circle cx="1124.2" cy="730.6" r="4" fill="#e08fc0"/><circle cx="1207.6" cy="752.2" r="4" fill="#e08fc0"/><polyline points="697.1,750.5 791.0,738.3 874.4,751.8 957.9,752.2 1041.7,739.0 1124.2,738.3 1207.6,754.1" fill="none" stroke="#6d6bc8" stroke-width="2.4" stroke-linejoin="round"/><circle cx="697.1" cy="750.5" r="4" fill="#6d6bc8"/><circle cx="791.0" cy="738.3" r="4" fill="#6d6bc8"/><circle cx="874.4" cy="751.8" r="4" fill="#6d6bc8"/><circle cx="957.9" cy="752.2" r="4" fill="#6d6bc8"/><circle cx="1041.7" cy="739.0" r="4" fill="#6d6bc8"/><circle cx="1124.2" cy="738.3" r="4" fill="#6d6bc8"/><circle cx="1207.6" cy="754.1" r="4" fill="#6d6bc8"/></svg>
<div class="abs" style="left:701.2px;top:868.4px;width:17px;height:11.8px;background:#56afbf"></div>
<div class="t" style="left:725.05px;top:867.77px;font-size:13.20px;color:#444;transform-origin:0 0;transform:scaleX(0.9913);-webkit-text-stroke:0.15px #444">use travel credit</div>
<div class="abs" style="left:832.4px;top:868.4px;width:17px;height:11.8px;background:#c57284"></div>
<div class="t" style="left:856.77px;top:867.77px;font-size:13.20px;color:#444;transform-origin:0 0;transform:scaleX(1.0061);-webkit-text-stroke:0.15px #444">change flight</div>
<div class="abs" style="left:946.2px;top:868.4px;width:17px;height:11.8px;background:#a9d87a"></div>
<div class="t" style="left:970.24px;top:867.77px;font-size:13.20px;color:#444;transform-origin:0 0;transform:scaleX(1.0045);-webkit-text-stroke:0.15px #444">request refund</div>
<div class="abs" style="left:1069.7px;top:868.4px;width:17px;height:11.8px;background:#e69a9a"></div>
<div class="t" style="left:1094.07px;top:867.77px;font-size:13.20px;color:#444;transform-origin:0 0;transform:scaleX(1.0130);-webkit-text-stroke:0.15px #444">cancel flight</div>
<div class="abs" style="left:682px;top:897.6px;width:17px;height:11.8px;background:#6b98e8"></div>
<div class="t" style="left:706.51px;top:896.17px;font-size:13.20px;color:#444;transform-origin:0 0;transform:scaleX(0.9934);-webkit-text-stroke:0.15px #444">seat assignment</div>
<div class="abs" style="left:817.7px;top:897.6px;width:17px;height:11.8px;background:#e08fc0"></div>
<div class="t" style="left:841.72px;top:896.17px;font-size:13.20px;color:#444;transform-origin:0 0;transform:scaleX(1.0219);-webkit-text-stroke:0.15px #444">book flight</div>
<div class="abs" style="left:917.3px;top:897.6px;width:17px;height:11.8px;background:#6d6bc8"></div>
<div class="t" style="left:941.14px;top:896.17px;font-size:13.20px;color:#444;transform-origin:0 0;transform:scaleX(0.9978);-webkit-text-stroke:0.15px #444">baggage question</div>
<div class="abs" style="left:1058.7px;top:897.6px;width:17px;height:11.8px;background:#747474"></div>
<div class="t" style="left:1082.73px;top:896.17px;font-size:13.20px;color:#444;transform-origin:0 0;transform:scaleX(1.0101);-webkit-text-stroke:0.15px #444">remaining intents</div>
</body></html>
